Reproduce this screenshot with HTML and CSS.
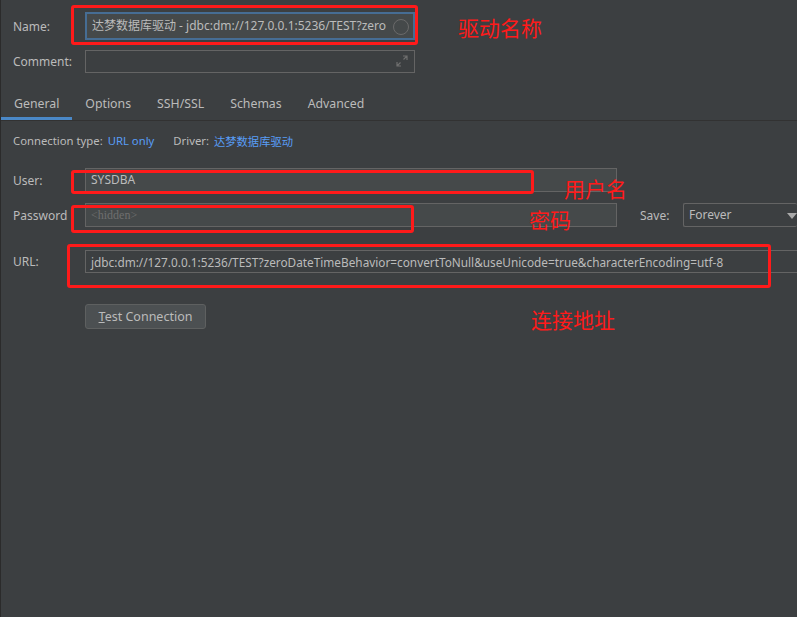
FILE: index.html
```html
<!DOCTYPE html>
<html>
<head>
    <link rel="stylesheet" href="styles.css">
</head>
<body>
    <div class="dialog">
        <div class="head">
            <div class="row name-row">
                <label>Name:</label>
                <div class="field focused">
                    <span class="val">达梦数据库驱动 - jdbc:dm://127.0.0.1:5236/TEST?zero</span>
                    <span class="ring"></span>
                </div>
            </div>
            <div class="row comment-row">
                <label>Comment:</label>
                <div class="field comment">
                    <svg class="expand" width="12" height="12" viewBox="0 0 12 12">
                        <path d="M7 1h4v4M11 1L7.5 4.5M5 11H1V7M1 11l3.5-3.5" fill="none" stroke="#6e6e6e" stroke-width="1.2"/>
                    </svg>
                </div>
            </div>
        </div>

        <div class="tabs">
            <div class="tab active">General</div>
            <div class="tab">Options</div>
            <div class="tab">SSH/SSL</div>
            <div class="tab">Schemas</div>
            <div class="tab">Advanced</div>
        </div>

        <div class="general">
            <div class="conn-type">
                <span>Connection type:</span>
                <a class="link">URL only</a>
                <span class="driver">Driver:</span>
                <a class="link">达梦数据库驱动</a>
            </div>

            <div class="row user-row">
                <label>User:</label>
                <div class="field wide">SYSDBA</div>
            </div>
            <div class="row pass-row">
                <label>Password</label>
                <div class="field wide hidden">&lt;hidden&gt;</div>
                <span class="save-label">Save:</span>
                <div class="field select">Forever<span class="arrow"></span></div>
            </div>
            <div class="row url-row">
                <label>URL:</label>
                <div class="field url">jdbc:dm://127.0.0.1:5236/TEST?zeroDateTimeBehavior=convertToNull&amp;useUnicode=true&amp;characterEncoding=utf-8</div>
            </div>

            <div class="btn-row">
                <button class="test-btn"><u>T</u>est Connection</button>
            </div>
        </div>
    </div>

    <!-- annotations drawn over the screenshot -->
    <div class="mark box-name"></div>
    <div class="mark box-user"></div>
    <div class="mark box-pass"></div>
    <div class="mark box-url"></div>
    <div class="note note-name">驱动名称</div>
    <div class="note note-user">用户名</div>
    <div class="note note-pass">密码</div>
    <div class="note note-url">连接地址</div>
</body>
</html>
```

FILE: styles.css
```css
body {
    margin: 0;
    width: 797px;
    height: 617px;
    overflow: hidden;
    background: #3c3f41;
    border-left: 1px solid #2b2b2b;
    box-sizing: border-box;
    color: #bbbbbb;
    font-family: 'Noto Sans', 'Noto Sans CJK SC', sans-serif;
    font-size: 12px;
    position: relative;
}

.dialog {
    width: 100%;
}

.head {
    padding: 12px 0 0 12px;
}

.row {
    display: flex;
    align-items: center;
}

.row label {
    width: 72px;
    flex-shrink: 0;
}

.field {
    background: #45494a;
    border: 1px solid #646464;
    box-sizing: border-box;
    height: 24px;
    line-height: 22px;
    padding: 0 5px;
    white-space: nowrap;
    overflow: hidden;
    position: relative;
}

.field.focused {
    width: 330px;
    height: 28px;
    line-height: 24px;
    border: 2px solid #466d94;
    padding-right: 26px;
}

.val {
    display: block;
    overflow: hidden;
}

.ring {
    position: absolute;
    right: 4px;
    top: 5px;
    width: 14px;
    height: 14px;
    border: 1px solid #6a6a6a;
    border-radius: 50%;
}

.comment-row {
    margin-top: 10px;
}

.field.comment {
    width: 330px;
    height: 23px;
    background: #3c3f41;
}

.expand {
    position: absolute;
    right: 6px;
    top: 4px;
}

.tabs {
    display: flex;
    margin-top: 16px;
    border-bottom: 1px solid #323232;
}

.tab {
    padding: 0 13px;
    height: 31px;
    line-height: 30px;
    font-size: 12.3px;
    box-sizing: border-box;
}

.tab.active {
    border-bottom: 3px solid #4a88c7;
    line-height: 30px;
}

.general {
    padding: 0 0 0 12px;
}

.conn-type {
    margin-top: 12px;
    display: flex;
    gap: 5px;
    font-size: 11.3px;
}

.link {
    color: #589df6;
}

.driver {
    margin-left: 14px;
}

.user-row {
    margin-top: 19px;
}

.field.wide {
    width: 532px;
    background: #45494a;
}

.field.hidden {
    color: #6f6f6f;
    font-family: 'Liberation Serif', serif;
    font-size: 12px;
}

.pass-row {
    margin-top: 11px;
}

.save-label {
    margin-left: 23px;
    width: 43px;
}

.field.select {
    flex: 1;
    border-radius: 2px;
    border-right: none;
    background: #3c3f41;
}

.arrow {
    position: absolute;
    right: 0;
    top: 9px;
    border: 5px solid transparent;
    border-top: 6px solid #aaaaaa;
    border-bottom: none;
}

.url-row {
    margin-top: 23px;
}

.field.url {
    flex: 1;
    height: 23px;
    border-right: none;
    background: #3c3f41;
    font-size: 11.8px;
}

.btn-row {
    margin: 31px 0 0 72px;
}

.test-btn {
    width: 121px;
    height: 25px;
    background: #4c5052;
    border: 1px solid #5e6060;
    border-radius: 3px;
    color: #bbbbbb;
    font-family: 'Noto Sans', sans-serif;
    font-size: 12.5px;
    padding: 0;
}

.mark {
    position: absolute;
    border: 3px solid #ff1a1a;
    border-radius: 3px;
    box-sizing: border-box;
}

.box-name { left: 70px; top: 5px; width: 347px; height: 40px; }
.box-user { left: 70px; top: 170px; width: 463px; height: 24px; }
.box-pass { left: 70px; top: 205px; width: 343px; height: 28px; }
.box-url  { left: 66px; top: 244px; width: 704px; height: 44px; }

.note {
    position: absolute;
    color: #ff1a1a;
    font-family: 'Noto Sans CJK SC', sans-serif;
    font-size: 21px;
    line-height: 22px;
}

.note-name { left: 457px; top: 16px; }
.note-user { left: 563px; top: 177px; }
.note-pass { left: 528px; top: 208px; }
.note-url  { left: 530px; top: 308px; }
```
